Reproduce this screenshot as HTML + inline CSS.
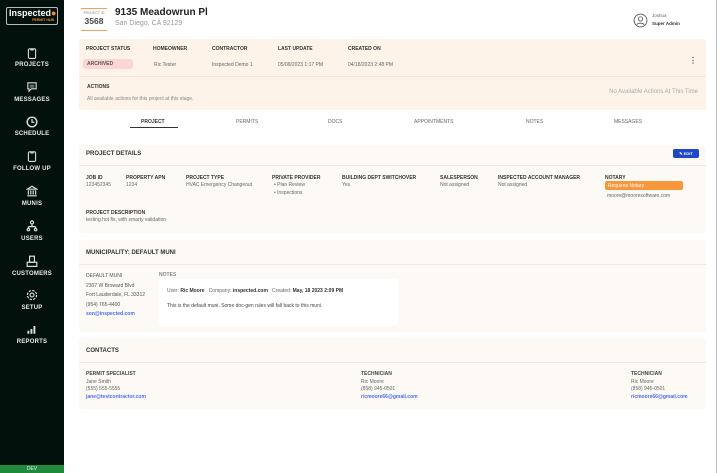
<!DOCTYPE html>
<html><head><style>
*{margin:0;padding:0;box-sizing:border-box}
body{width:720px;height:473px;overflow:hidden;background:#fff;font-family:"Liberation Sans",sans-serif;color:#333;position:relative}
.a{position:absolute;white-space:nowrap}
#sb{position:absolute;left:0;top:0;width:64px;height:473px;background:#03110d}
.nv{position:absolute;left:0;width:64px;text-align:center;color:#e8e8e8;font-size:6px;font-weight:bold;letter-spacing:.2px}
.ic{position:absolute;left:26px;width:12px;height:12px}
.lb{font-size:5px;font-weight:bold;color:#333}
.vl{font-size:5px;color:#666}
.card{position:absolute;left:79px;width:627px;background:#fdfaf5;border-radius:4px}
.hd{position:absolute;left:7px;font-size:6px;font-weight:bold;color:#333}
.dv{position:absolute;left:0;right:0;height:1px;background:#efe9e1}
.ln{color:#4a6cf0;font-weight:bold;font-size:5px}
</style></head><body>
<div id="sb">
 <div class="a" style="left:6px;top:7px;width:52px;height:18px;border:1px solid #bbb;border-radius:2px;color:#fff;font-size:9px;font-weight:bold;padding-left:2px;line-height:10px">Inspected<span style="color:#f08a2c">●</span><div style="font-size:3.5px;color:#f08a2c;text-align:right;padding-right:3px;line-height:5px">PERMIT HUB</div></div>
 <svg class="ic" style="top:47px" viewBox="0 0 10 10"><rect x="2" y="1.5" width="6" height="8" rx="1" fill="none" stroke="#ddd" stroke-width=".9"/><path d="M4 1.5v1h2v-1" stroke="#ddd" fill="none" stroke-width=".8"/></svg>
 <div class="nv" style="top:62px">PROJECTS</div>
 <svg class="ic" style="top:81px" viewBox="0 0 10 10"><path d="M1.5 1.5h7v5h-4l-2 2v-2h-1z" fill="none" stroke="#ddd" stroke-width=".9"/><path d="M3 3.5h4M3 5h4" stroke="#ddd" stroke-width=".6"/></svg>
 <div class="nv" style="top:97px">MESSAGES</div>
 <svg class="ic" style="top:116px" viewBox="0 0 10 10"><circle cx="5" cy="5" r="4" fill="none" stroke="#ddd" stroke-width="1.2"/><path d="M5 2.5v2.7h2" stroke="#ddd" fill="none"/></svg>
 <div class="nv" style="top:131px">SCHEDULE</div>
 <svg class="ic" style="top:150px" viewBox="0 0 10 10"><rect x="2" y="1.5" width="6" height="8" rx="1" fill="none" stroke="#ddd" stroke-width=".9"/><path d="M4 1.5v1h2v-1" stroke="#ddd" fill="none" stroke-width=".8"/></svg>
 <div class="nv" style="top:166px">FOLLOW UP</div>
 <svg class="ic" style="top:185px" viewBox="0 0 10 10"><path d="M1 3.5L5 1l4 2.5zM2 4.5v3.5M4 4.5v3.5M6 4.5v3.5M8 4.5v3.5M1 9h8" stroke="#ddd" fill="none"/></svg>
 <div class="nv" style="top:201px">MUNIS</div>
 <svg class="ic" style="top:220px" viewBox="0 0 10 10"><circle cx="5" cy="2" r="1.3" fill="none" stroke="#ddd"/><path d="M5 3.5v2M2 5.5h6M2 5.5v1.5M8 5.5v1.5" stroke="#ddd" fill="none"/><circle cx="2" cy="8" r="1" fill="none" stroke="#ddd"/><circle cx="8" cy="8" r="1" fill="none" stroke="#ddd"/></svg>
 <div class="nv" style="top:236px">USERS</div>
 <svg class="ic" style="top:255px" viewBox="0 0 10 10"><rect x="3" y="1" width="4" height="5" fill="none" stroke="#ddd"/><rect x="1" y="6" width="8" height="3.5" fill="none" stroke="#ddd"/></svg>
 <div class="nv" style="top:271px">CUSTOMERS</div>
 <svg class="ic" style="top:289px" viewBox="0 0 10 10"><circle cx="5" cy="5" r="1.6" fill="none" stroke="#ddd"/><circle cx="5" cy="5" r="3.8" fill="none" stroke="#ddd" stroke-dasharray="2 1"/></svg>
 <div class="nv" style="top:305px">SETUP</div>
 <svg class="ic" style="top:323px" viewBox="0 0 10 10"><path d="M2 9V6.5M4.5 9V5M7 9V2.5" stroke="#ddd" stroke-width="1.6"/></svg>
 <div class="nv" style="top:339px">REPORTS</div>
 <div class="a" style="left:0;top:465px;width:64px;height:8px;background:#1f8a3c;color:#eee;font-size:5px;text-align:center;line-height:8px">DEV</div>
</div>
<div class="a" style="left:716px;top:0;width:4px;height:473px;background:#bbb"></div>
<div class="a" style="left:717px;top:0;width:3px;height:473px;background:#fff"></div>

<div class="a" style="left:81px;top:8px;width:26px;height:23px;border-top:1.5px solid #f5a05a;border-bottom:1.5px solid #f5a05a;text-align:center">
 <div style="font-size:3.5px;color:#888;margin-top:2px">PROJECT ID</div>
 <div style="font-size:8.5px;color:#444;font-weight:bold;margin-top:1px">3568</div></div>
<div class="a" style="left:115px;top:7px;font-size:10px;font-weight:bold;color:#222">9135 Meadowrun Pl</div>
<div class="a" style="left:115px;top:20px;font-size:7px;color:#999">San Diego, CA 92129</div>
<svg class="a" style="left:633px;top:13px" width="15" height="15" viewBox="0 0 14 14"><circle cx="7" cy="7" r="6" fill="none" stroke="#555" stroke-width=".8"/><circle cx="7" cy="5.5" r="2" fill="none" stroke="#555" stroke-width=".8"/><path d="M3.5 11c1-2 6-2 7 0" fill="none" stroke="#555" stroke-width=".8"/></svg>
<div class="a" style="left:652px;top:13px;font-size:4.5px;color:#666">Joshua</div>
<div class="a" style="left:652px;top:21px;font-size:4.5px;color:#333;font-weight:bold">Super Admin</div>

<div class="card" style="top:39px;height:71px;background:#fdf3e9;border-radius:2px">
 <div class="a lb" style="left:7px;top:7px">PROJECT STATUS</div>
 <div class="a lb" style="left:74px;top:7px">HOMEOWNER</div>
 <div class="a lb" style="left:133px;top:7px">CONTRACTOR</div>
 <div class="a lb" style="left:199px;top:7px">LAST UPDATE</div>
 <div class="a lb" style="left:269px;top:7px">CREATED ON</div>
 <div class="a" style="left:4px;top:20px;width:50px;height:10px;background:#fcd6d3;border-radius:3px;font-size:5px;color:#555;padding:2px 0 0 4px;font-weight:bold">ARCHIVED</div>
 <div class="a vl" style="left:75px;top:23px">Ric Tester</div>
 <div class="a vl" style="left:133px;top:23px">Inspected Demo 1</div>
 <div class="a vl" style="left:199px;top:23px">05/09/2023 1:17 PM</div>
 <div class="a vl" style="left:269px;top:23px">04/18/2023 2:48 PM</div>
 <div class="a" style="left:610px;top:17px;font-size:8px;color:#555;font-weight:bold">⋮</div>
 <div class="dv" style="top:37px;background:#f3e7da"></div>
 <div class="a lb" style="left:8px;top:45px">ACTIONS</div>
 <div class="a vl" style="left:8px;top:57px;color:#888">All available actions for this project at this stage.</div>
 <div class="a" style="right:8px;top:50px;font-size:6px;color:#aaa">No Available Actions At This Time</div>
</div>

<div class="a lb" style="left:141px;top:119px;font-size:5px">PROJECT</div>
<div class="a" style="left:130px;top:127px;width:48px;height:1px;background:#333"></div>
<div class="a vl" style="left:236px;top:119px">PERMITS</div>
<div class="a vl" style="left:328px;top:119px">DOCS</div>
<div class="a vl" style="left:414px;top:119px">APPOINTMENTS</div>
<div class="a vl" style="left:526px;top:119px">NOTES</div>
<div class="a vl" style="left:614px;top:119px">MESSAGES</div>

<div class="card" style="top:145px;height:88px">
 <div class="hd" style="top:6px">PROJECT DETAILS</div>
 <div class="a" style="left:594px;top:4px;width:26px;height:9px;background:#2047c9;border-radius:2px;color:#fff;font-size:4px;font-weight:bold;text-align:center;line-height:9px">✎ EDIT</div>
 <div class="dv" style="top:20px"></div>
 <div class="a lb" style="left:7px;top:30px">JOB ID</div><div class="a vl" style="left:7px;top:37px">123452345</div>
 <div class="a lb" style="left:47px;top:30px">PROPERTY APN</div><div class="a vl" style="left:47px;top:37px">1234</div>
 <div class="a lb" style="left:107px;top:30px">PROJECT TYPE</div><div class="a vl" style="left:107px;top:37px">HVAC Emergency Changeout</div>
 <div class="a lb" style="left:193px;top:30px">PRIVATE PROVIDER</div><div class="a vl" style="left:195px;top:37px;line-height:7.5px">• Plan Review<br>• Inspections</div>
 <div class="a lb" style="left:263px;top:30px">BUILDING DEPT SWITCHOVER</div><div class="a vl" style="left:263px;top:37px">Yes</div>
 <div class="a lb" style="left:361px;top:30px">SALESPERSON</div><div class="a vl" style="left:361px;top:37px">Not assigned</div>
 <div class="a lb" style="left:419px;top:30px">INSPECTED ACCOUNT MANAGER</div><div class="a vl" style="left:419px;top:37px">Not assigned</div>
 <div class="a lb" style="left:526px;top:30px">NOTARY</div>
 <div class="a" style="left:526px;top:36px;width:78px;height:9px;background:#f7963b;border-radius:2px;color:#fff;font-size:5px;padding:2px 0 0 3px">Requires Notary</div>
 <div class="a vl" style="left:528px;top:48px">moore@mooresoftware.com</div>
 <div class="a lb" style="left:7px;top:65px">PROJECT DESCRIPTION</div>
 <div class="a vl" style="left:7px;top:72px">testing hot fix, with smarty validation</div>
</div>

<div class="card" style="top:240px;height:92px">
 <div class="hd" style="top:10px">MUNICIPALITY: DEFAULT MUNI</div>
 <div class="dv" style="top:24px"></div>
 <div class="a vl" style="left:7px;top:32px;line-height:9.5px;color:#555">DEFAULT MUNI<br>2307 W Broward Blvd<br>Fort Lauderdale, FL 33312<br>(954) 765-4400<br><span class="ln">son@inspected.com</span></div>
 <div class="a vl" style="left:80px;top:32px;color:#555">NOTES</div>
 <div class="a" style="left:80px;top:39px;width:239px;height:47px;background:#fff;border-radius:3px">
  <div class="a vl" style="left:8px;top:9px">User: <b style="color:#333">Ric Moore</b> &nbsp; Company: <b style="color:#333">inspected.com</b> &nbsp; Created: <b style="color:#333">May, 18 2023 2:09 PM</b></div>
  <div class="a vl" style="left:8px;top:24px;color:#444">This is the default muni. Some doc-gen rules will fall back to this muni.</div>
 </div>
</div>

<div class="card" style="top:338px;height:71px">
 <div class="hd" style="top:10px">CONTACTS</div>
 <div class="dv" style="top:24px"></div>
 <div class="a vl" style="left:7px;top:33px;line-height:7.5px"><b style="color:#444">PERMIT SPECIALIST</b><br>Jane Smith<br>(555) 555-5555<br><span class="ln">jane@testcontractor.com</span></div>
 <div class="a vl" style="left:282px;top:33px;line-height:7.5px"><b style="color:#444">TECHNICIAN</b><br>Ric Moore<br>(858) 945-0501<br><span class="ln">ricmoore66@gmail.com</span></div>
 <div class="a vl" style="left:552px;top:33px;line-height:7.5px"><b style="color:#444">TECHNICIAN</b><br>Ric Moore<br>(858) 945-0501<br><span class="ln">ricmoore66@gmail.com</span></div>
</div>
</body></html>
